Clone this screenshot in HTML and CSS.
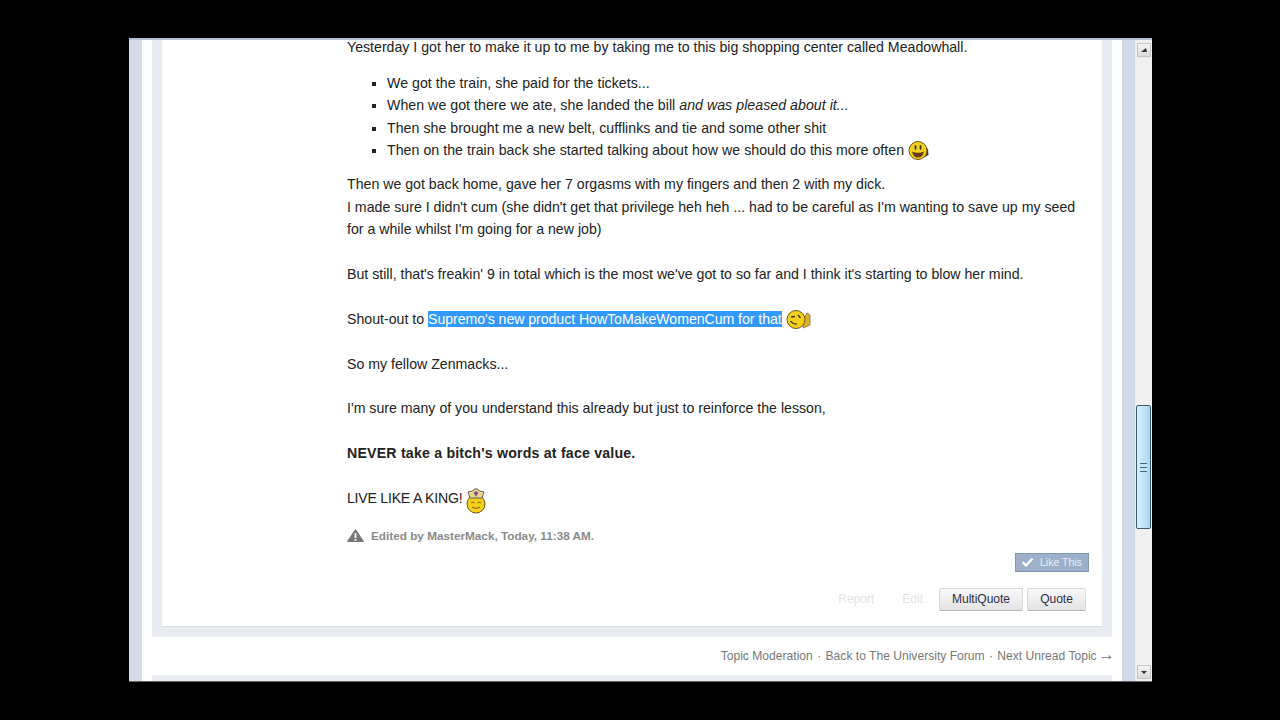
FILE: index.html
```html
<!DOCTYPE html>
<html lang="en">

<head>
    <meta charset="UTF-8">
    <title>The University Forum</title>
    <link rel="stylesheet" href="styles.css">
</head>

<body>
    <div class="window">
        <div class="page">
            <div class="band">
                <div class="wrap">
                    <div class="post">
                        <div class="post-text">
                            <div>Yesterday I got her to make it up to me by taking me to this big shopping center called Meadowhall.</div>
                            <ul>
                                <li>We got the train, she paid for the tickets...</li>
                                <li>When we got there we ate, she landed the bill <em>and was pleased about it...</em></li>
                                <li>Then she brought me a new belt, cufflinks and tie and some other shit</li>
                                <li>Then on the train back she started talking about how we should do this more often
                                    <svg class="smiley" width="21" height="19" viewBox="0 0 21 19">
                                        <path d="M14 4 L20 8 L20.500 14 L15 17 Z" fill="#4a3818" />
                                        <circle cx="10" cy="9.500" r="9" fill="#f5d016" stroke="#6d5510" />
                                        <ellipse cx="7.500" cy="6.500" rx="1" ry="2.400" fill="#333" />
                                        <ellipse cx="12.500" cy="6.500" rx="1" ry="2.400" fill="#333" />
                                        <path d="M4 10.500 Q10 13 16 10.500 Q15 16.500 10 16.500 Q5 16.500 4 10.500 Z" fill="#6a3a10" />
                                    </svg>
                                </li>
                            </ul>
                            Then we got back home, gave her 7 orgasms with my fingers and then 2 with my dick.<br>
                            I made sure I didn't cum (she didn't get that privilege heh heh ... had to be careful as I'm wanting to save up my seed for a while whilst I'm going for a new job)<br>
                            <br>
                            But still, that's freakin' 9 in total which is the most we've got to so far and I think it's starting to blow her mind.<br>
                            <br>
                            Shout-out to <span class="selected">Supremo's new product HowToMakeWomenCum for that</span>
                            <svg class="smiley" width="25" height="19" viewBox="0 0 25 19">
                                <path d="M18 9 L21 3 L24 5 L24 15 L17 18 Z" fill="#d9b13a" stroke="#8a7020" stroke-width=".8" />
                                <circle cx="10" cy="9.500" r="9" fill="#f5d016" stroke="#6d5510" />
                                <path d="M5 7 L9 6.500 M12 5 L14.500 8" stroke="#333" stroke-width="1.400" fill="none" />
                                <path d="M4.500 11 Q7 14.500 11 14" stroke="#333" stroke-width="1.200" fill="none" />
                            </svg><br>
                            <br>
                            So my fellow Zenmacks...<br>
                            <br>
                            I'm sure many of you understand this already but just to reinforce the lesson,<br>
                            <br>
                            <strong>NEVER take a bitch's words at face value.</strong><br>
                            <br>
                            <span class="caps">LIVE LIKE A KING!</span>
                            <svg class="smiley king" width="20" height="26" viewBox="0 0 20 26">
                                <circle cx="10" cy="16" r="9" fill="#f5d016" stroke="#6d5510" />
                                <path d="M2 4 L6 3 L10 0.500 L14 3 L18 4 L16 10 L4 10 Z" fill="#e6d68a" stroke="#6a5a60" />
                                <path d="M7.500 5 L10 3 L12.500 5 L10 8.500 Z" fill="#8a4a90" />
                                <path d="M5 15 Q7 13 8.500 15 M11.500 15 Q13 13 15 15 M6 19 Q10 22 14 19" stroke="#7a5a10" fill="none" />
                            </svg>
                        </div>
                        <div class="edited">
                            <svg width="17" height="13" viewBox="0 0 17 13">
                                <path d="M8.500 0.500 L16.500 12.500 L0.500 12.500 Z" fill="#777" stroke="#777" stroke-linejoin="round" />
                                <rect x="7.600" y="4" width="1.800" height="5" fill="#fff" />
                                <rect x="7.600" y="10" width="1.800" height="1.800" fill="#fff" />
                            </svg>
                            Edited by MasterMack, Today, 11:38 AM.
                        </div>
                        <div class="like-row">
                            <span class="like">
                                <svg width="13" height="10" viewBox="0 0 13 10">
                                    <path d="M1.500 5 L5 8.500 L11.500 1.500" stroke="#fff" stroke-width="2.400" fill="none" />
                                </svg>
                                Like This
                            </span>
                        </div>
                        <div class="controls">
                            <span class="faint report">Report</span>
                            <span class="faint edit">Edit</span>
                            <span class="btn multi">MultiQuote</span>
                            <span class="btn quote">Quote</span>
                        </div>
                    </div>
                </div>
                <div class="topic-links">
                    Topic Moderation <span class="sep">·</span> Back to The University Forum <span class="sep">·</span> Next Unread Topic <span class="arrow-right">→</span>
                </div>
                <div class="next-strip"></div>
            </div>
        </div>
        <div class="scrollbar">
            <div class="arrow"><svg width="8" height="6" viewBox="0 0 8 6"><path d="M1 5 L6 1 L7 5 Z" fill="#333" /></svg></div>
            <div class="thumb"><div class="grip"></div></div>
            <div class="arrow down"><svg width="8" height="5" viewBox="0 0 8 5"><path d="M1 1 L7 1 L4 4 Z" fill="#333" /></svg></div>
        </div>
    </div>
</body>

</html>
```

FILE: styles.css
```css
html,
body {
    margin: 0;
    height: 720px;
    overflow: hidden;
}

body {
    background-color: #000;
    padding: 38px 128px 0 129px;
    box-sizing: border-box;
    font-family: "Liberation Sans", Arial, sans-serif;
    font-size: 14.16px;
    color: #222;
}

.window {
    display: flex;
    width: 1023px;
    height: 644px;
    box-sizing: border-box;
    border-top: 2px solid #b4c3d9;
    border-bottom: 1px solid #666;
    overflow: hidden;
    background-color: #fff;
}

.page {
    flex: 1;
    background-color: #fff;
    border-left: 13px solid #d5dce8;
    border-right: 13px solid #d0d9e7;
    padding: 0 10px;
    overflow: hidden;
}

.wrap {
    background-color: #e8ecf1;
    padding: 0 10px 10px;
}

.post {
    background-color: #fff;
    height: 591px;
    box-sizing: border-box;
    padding-left: 185px;
    padding-right: 13px;
    border-bottom: 1px solid #dcdfe4;
}

.post-text {
    margin-top: -4px;
    line-height: 22.4px;
}

.post-text ul {
    list-style: square;
    margin: 13.4px 0 11.9px;
    padding-left: 40px;
    letter-spacing: 0.04px;
}

.selected {
    background-color: #3399ff;
    color: #fff;
    letter-spacing: -0.06px;
}

.smiley {
    vertical-align: -5px;
}

.king {
    vertical-align: -9px;
    margin: -4px 0 -2px;
}

.caps {
    letter-spacing: -0.25px;
}

strong {
    letter-spacing: 0.2px;
}

.edited {
    display: flex;
    align-items: center;
    gap: 7px;
    margin-top: 16.5px;
    font-size: 11.75px;
    font-weight: bold;
    color: #8a8a8a;
}

.like-row {
    display: flex;
    justify-content: flex-end;
    margin-top: 11px;
}

.like {
    display: flex;
    align-items: center;
    gap: 6px;
    width: 74px;
    height: 19px;
    box-sizing: border-box;
    padding-left: 5px;
    background-color: #9db0c9;
    border: 1px solid #8197b6;
    color: #e8eef5;
    font-size: 10.5px;
}

.controls {
    display: flex;
    align-items: center;
    justify-content: flex-end;
    margin-top: 16px;
    padding-right: 3px;
    font-size: 12px;
}

.faint {
    color: #dfe3e8;
}

.report {
    margin-right: 28px;
}

.edit {
    margin-right: 16px;
}

.btn {
    display: flex;
    align-items: center;
    justify-content: center;
    height: 23px;
    box-sizing: border-box;
    background: linear-gradient(#f8f8f8, #e4e4e6);
    border: 1px solid #d8d8d8;
    border-bottom-color: #b5b5b5;
    border-radius: 2px;
    color: #2a2d45;
}

.multi {
    width: 84px;
    margin-right: 4px;
}

.quote {
    width: 59px;
}

.topic-links {
    text-align: right;
    height: 38px;
    line-height: 39px;
    font-size: 12.1px;
    color: #777;
}

.sep {
    margin: 0 1px;
}

.arrow-right {
    font-size: 17px;
    line-height: 1;
    margin: 0 -3px 0 -2px;
}

.next-strip {
    height: 8px;
    background-color: #e8ecf1;
}

.scrollbar {
    width: 17px;
    background-color: #f0f0f0;
    display: flex;
    flex-direction: column;
    align-items: center;
    padding-top: 3px;
    box-sizing: border-box;
}

.arrow {
    display: flex;
    align-items: center;
    justify-content: center;
    width: 14px;
    height: 14px;
    box-sizing: border-box;
    background: linear-gradient(#f4f4f4, #dcdcdc);
    border: 1px solid #c4c4c4;
}

.down {
    margin-top: 136px;
}

.thumb {
    display: flex;
    align-items: center;
    justify-content: center;
    width: 15px;
    height: 124px;
    margin-top: 348px;
    box-sizing: border-box;
    background: linear-gradient(90deg, #d8f0fc, #bfe3f7 50%, #a8d6f0);
    border: 1px solid #3c5a70;
    border-radius: 2px;
}

.grip {
    width: 7px;
    height: 7px;
    border-top: 1px solid #44667c;
    border-bottom: 1px solid #44667c;
    background: linear-gradient(#bfe3f7 40%, #44667c 40%, #44667c 60%, #bfe3f7 60%);
}
```
